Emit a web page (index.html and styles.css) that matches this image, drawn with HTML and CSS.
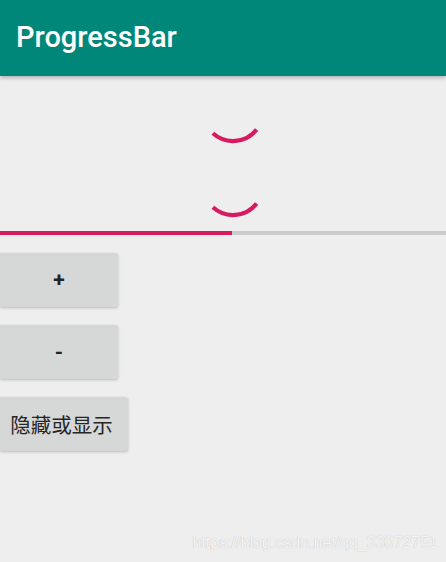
FILE: index.html
```html
<!DOCTYPE html>
<html>
<head>
<meta charset="utf-8">
<link rel="stylesheet" href="styles.css">
</head>
<body>
<div class="app">
  <header class="toolbar"><span class="title">ProgressBar</span></header>
  <main class="content">
    <div class="spinner first">
      <svg width="66" height="66" viewBox="0 0 66 66"><path d="M56.6 51.5 A30 30 0 0 1 12.9 55.3" fill="none" stroke="#d81b60" stroke-width="4.2"/></svg>
    </div>
    <div class="spinner second">
      <svg width="66" height="66" viewBox="0 0 66 66"><path d="M56.6 51.5 A30 30 0 0 1 12.9 55.3" fill="none" stroke="#d81b60" stroke-width="4.2"/></svg>
    </div>
    <div class="bar"><div class="bar-fill" style="width:52%"></div></div>
    <div class="buttons">
      <button class="btn btn-plus">+</button>
      <button class="btn btn-minus">-</button>
      <button class="btn btn-toggle">隐藏或显示</button>
    </div>
  </main>
  <div class="watermark">https://blog.csdn.net/qq_33072751</div>
</div>
</body>
</html>
```
FILE: styles.css
```css
html, body {
  margin: 0;
  padding: 0;
  background: #eeeeee;
}
.app {
  position: relative;
  width: 446px;
  height: 562px;
  overflow: hidden;
  background: #eeeeee;
  font-family: Roboto, "Noto Sans CJK SC", sans-serif;
}
.toolbar {
  height: 76px;
  background: #00877a;
  display: flex;
  align-items: center;
  padding-left: 16px;
  box-shadow: 0 2px 4px rgba(0,0,0,0.25);
  position: relative;
  z-index: 1;
}
.title {
  color: #ffffff;
  font-size: 29px;
  font-weight: 500;
  margin-top: -3px;
}
.content {
  display: flex;
  flex-direction: column;
}
.spinner {
  display: flex;
  justify-content: center;
  height: 66px;
}
.spinner svg {
  display: block;
  margin-left: 20px;
}
.first {
  margin-top: 2px;
}
.second {
  margin-top: 8px;
}
.bar {
  margin-top: 13px;
  height: 4px;
  background: #cccccc;
}
.bar-fill {
  height: 100%;
  background: #d81b60;
}
.buttons {
  display: flex;
  flex-direction: column;
  align-items: flex-start;
  gap: 18px;
  margin-top: 18px;
}
.btn {
  height: 54px;
  border: none;
  border-radius: 0 3px 3px 0;
  background: #d6d7d7;
  box-shadow: 0 1px 3px rgba(0,0,0,0.22);
  color: #222222;
  font-family: Roboto, "Noto Sans CJK SC", sans-serif;
  font-size: 19px;
  font-weight: 500;
  padding: 0;
  margin: 0;
}
.btn-plus, .btn-minus {
  width: 118px;
  font-size: 21px;
  font-weight: 700;
}
.btn-toggle {
  width: 128px;
  padding-right: 5px;
  font-size: 20.5px;
  font-weight: 400;
  color: #262626;
}
.watermark {
  position: absolute;
  right: 8px;
  bottom: 10px;
  font-family: "Liberation Sans", Arial, sans-serif;
  font-size: 16px;
  color: rgba(255,255,255,0.85);
  text-shadow: 0 0 1px rgba(0,0,0,0.25);
}
```
